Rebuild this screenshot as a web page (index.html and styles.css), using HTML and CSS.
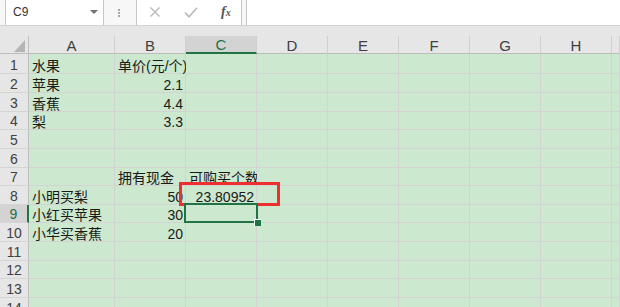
FILE: index.html
```html
<!DOCTYPE html>
<html lang="zh-CN">

<head>
    <meta charset="UTF-8">
    <meta name="viewport" content="width=device-width, initial-scale=1.0">
    <title>水果价格表</title>
    <link rel="stylesheet" href="styles.css">
</head>

<body>
    <!-- Formula bar -->
    <div class="formula-bar">
        <div class="name-box">
            <span>C9</span>
            <svg class="caret" width="8" height="4" viewBox="0 0 8 4"><path d="M0 0h8L4 4z" fill="#707070"/></svg>
        </div>
        <div class="grip"><i></i><i></i><i></i></div>
        <div class="fx-tools">
            <svg width="12" height="10" viewBox="0 0 12 10"><path d="M1.5 0.5l9 9M10.5 0.5l-9 9" stroke="#b9b9b9" stroke-width="1.4" fill="none"/></svg>
            <svg width="14" height="11" viewBox="0 0 14 11"><path d="M1 5.5l4 4.2L13 0.8" stroke="#b9b9b9" stroke-width="1.6" fill="none"/></svg>
            <span class="fx">f<small>x</small></span>
        </div>
        <div class="formula-input"></div>
    </div>
    <div class="band"></div>

    <!-- Sheet -->
    <div class="sheet">
        <div class="corner"><svg width="11" height="12" viewBox="0 0 11 12"><path d="M11 0V12H0z" fill="#b5b5b5"/></svg></div>
        <div class="ch">A</div><div class="ch">B</div><div class="ch active">C</div><div class="ch">D</div><div class="ch">E</div><div class="ch">F</div><div class="ch">G</div><div class="ch">H</div><div class="ch"></div>

        <div class="rh">1</div><div class="c">水果</div><div class="c">单价(元/个)</div><div class="c"></div><div class="c"></div><div class="c"></div><div class="c"></div><div class="c"></div><div class="c"></div><div class="c"></div>
        <div class="rh">2</div><div class="c">苹果</div><div class="c num">2.1</div><div class="c"></div><div class="c"></div><div class="c"></div><div class="c"></div><div class="c"></div><div class="c"></div><div class="c"></div>
        <div class="rh">3</div><div class="c">香蕉</div><div class="c num">4.4</div><div class="c"></div><div class="c"></div><div class="c"></div><div class="c"></div><div class="c"></div><div class="c"></div><div class="c"></div>
        <div class="rh">4</div><div class="c">梨</div><div class="c num">3.3</div><div class="c"></div><div class="c"></div><div class="c"></div><div class="c"></div><div class="c"></div><div class="c"></div><div class="c"></div>
        <div class="rh">5</div><div class="c"></div><div class="c"></div><div class="c"></div><div class="c"></div><div class="c"></div><div class="c"></div><div class="c"></div><div class="c"></div><div class="c"></div>
        <div class="rh">6</div><div class="c"></div><div class="c"></div><div class="c"></div><div class="c"></div><div class="c"></div><div class="c"></div><div class="c"></div><div class="c"></div><div class="c"></div>
        <div class="rh">7</div><div class="c"></div><div class="c">拥有现金</div><div class="c">可购买个数</div><div class="c"></div><div class="c"></div><div class="c"></div><div class="c"></div><div class="c"></div><div class="c"></div>
        <div class="rh">8</div><div class="c">小明买梨</div><div class="c num">50</div><div class="c num marked">23.80952<span class="red-box"></span></div><div class="c"></div><div class="c"></div><div class="c"></div><div class="c"></div><div class="c"></div><div class="c"></div>
        <div class="rh active">9</div><div class="c">小红买苹果</div><div class="c num">30</div><div class="c selected"><span class="sel-box"><i class="handle"></i></span></div><div class="c"></div><div class="c"></div><div class="c"></div><div class="c"></div><div class="c"></div><div class="c"></div>
        <div class="rh">10</div><div class="c">小华买香蕉</div><div class="c num">20</div><div class="c"></div><div class="c"></div><div class="c"></div><div class="c"></div><div class="c"></div><div class="c"></div><div class="c"></div>
        <div class="rh">11</div><div class="c"></div><div class="c"></div><div class="c"></div><div class="c"></div><div class="c"></div><div class="c"></div><div class="c"></div><div class="c"></div><div class="c"></div>
        <div class="rh">12</div><div class="c"></div><div class="c"></div><div class="c"></div><div class="c"></div><div class="c"></div><div class="c"></div><div class="c"></div><div class="c"></div><div class="c"></div>
        <div class="rh">13</div><div class="c"></div><div class="c"></div><div class="c"></div><div class="c"></div><div class="c"></div><div class="c"></div><div class="c"></div><div class="c"></div><div class="c"></div>
        <div class="rh">14</div><div class="c"></div><div class="c"></div><div class="c"></div><div class="c"></div><div class="c"></div><div class="c"></div><div class="c"></div><div class="c"></div><div class="c"></div>
    </div>
</body>

</html>
```

FILE: styles.css
```css
/* General Reset */
* {
    margin: 0;
    padding: 0;
    box-sizing: border-box;
}

body {
    font-family: 'Liberation Sans', 'Noto Sans CJK SC', sans-serif;
    background: #e6e6e6;
    color: #1a1a1a;
    width: 620px;
    height: 307px;
    overflow: hidden;
}

/* Formula bar */
.formula-bar {
    display: flex;
    height: 26px;
    background: #f7f7f7;
    border-bottom: 1px solid #d2d2d2;
}

.name-box {
    display: flex;
    align-items: center;
    justify-content: space-between;
    width: 99px;
    margin-left: 5px;
    padding: 0 5px 1px 7px;
    background: #fff;
    border-left: 1px solid #c6c6c6;
    border-right: 1px solid #c6c6c6;
    font-size: 12px;
    color: #333;
}

.grip {
    display: flex;
    flex-direction: column;
    justify-content: center;
    gap: 1px;
    width: 32px;
    padding-left: 14px;
}

.grip i {
    width: 2px;
    height: 2px;
    background: #a8a8a8;
}

.fx-tools {
    display: flex;
    align-items: center;
    width: 106px;
    padding: 0 0 1px 12px;
    background: #fff;
    border-left: 1px solid #c6c6c6;
    border-right: 1px solid #c6c6c6;
}

.fx-tools svg:first-child {
    margin-right: 23px;
}

.fx-tools svg:nth-child(2) {
    margin-right: 23px;
}

.fx {
    font-family: 'Liberation Serif', serif;
    font-style: italic;
    font-weight: bold;
    font-size: 14px;
    color: #555;
}

.fx small {
    font-size: 10px;
}

.formula-input {
    flex: 1;
    margin-left: 4px;
    background: #fff;
    border-left: 1px solid #c6c6c6;
}

.band {
    height: 10px;
    background: #e6e6e6;
}

/* Sheet grid */
.sheet {
    display: grid;
    grid-template-columns: 29px 86px repeat(7, 71px) 1fr;
    grid-template-rows: 18px 20px 19px 19px 18px 19px 19px 18px 19px 18px 19px 19px 18px 19px 19px;
    font-size: 14px;
    line-height: 14px;
}

.corner {
    display: flex;
    align-items: flex-end;
    justify-content: flex-end;
    padding: 0 3px 1px 0;
    background: #e6e6e6;
    border-right: 1px solid #bfbfbf;
    border-bottom: 1px solid #bcbcbc;
}

.ch {
    display: flex;
    align-items: flex-end;
    justify-content: center;
    font-size: 15px;
    color: #404040;
    background: #e6e6e6;
    border-right: 1px solid #cfcfcf;
    border-bottom: 1px solid #bcbcbc;
}

.ch.active {
    background: #d3d3d3;
    color: #217346;
    border-bottom: 2px solid #217346;
}

.rh {
    display: flex;
    align-items: flex-end;
    justify-content: center;
    padding-bottom: 1px;
    color: #404040;
    background: #e6e6e6;
    border-right: 1px solid #bfbfbf;
    border-bottom: 1px solid #d4d4d4;
}

.rh.active {
    background: #d3d3d3;
    color: #217346;
    border-right: 2px solid #217346;
}

.c {
    display: flex;
    align-items: flex-end;
    padding: 0 3px;
    white-space: nowrap;
    background: #cce8cf;
    border-right: 1px solid #d3d3d3;
    border-bottom: 1px solid #d3d3d3;
}

.c.num {
    justify-content: flex-end;
    padding-right: 2px;
}

.marked,
.selected {
    position: relative;
}

/* Annotation and selection overlays */
.red-box {
    position: absolute;
    left: -7px;
    top: -4px;
    width: 101px;
    height: 24px;
    border: 3px solid #ee2f2f;
}

.sel-box {
    position: absolute;
    left: -2px;
    top: -2px;
    width: 74px;
    height: 20px;
    border: 2px solid #217346;
}

.handle {
    position: absolute;
    right: -5px;
    bottom: -5px;
    width: 7px;
    height: 7px;
    background: #217346;
    border-left: 1px solid #fff;
    border-top: 1px solid #fff;
}
```
